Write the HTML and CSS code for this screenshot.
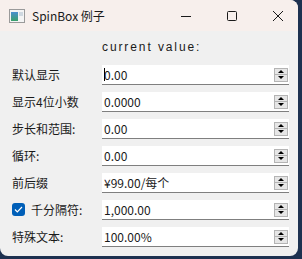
FILE: index.html
```html
<!DOCTYPE html>
<html lang="en">
<head>
    <meta charset="UTF-8">
    <title>SpinBox 例子</title>
    <link rel="stylesheet" href="styles.css">
</head>
<body>

<div class="window">
    <div class="titlebar">
        <svg class="app-icon" width="16" height="14" viewBox="0 0 16 14">
            <defs>
                <linearGradient id="pane" x1="0" y1="0" x2="0" y2="1">
                    <stop offset="0" stop-color="#4a8fd0"/>
                    <stop offset="1" stop-color="#3aa06a"/>
                </linearGradient>
            </defs>
            <rect x="0.5" y="0.5" width="15" height="13" fill="#f4f4f4" stroke="#9a9a9a"/>
            <rect x="2" y="3" width="7" height="9" fill="url(#pane)"/>
            <rect x="10" y="3" width="4" height="4" fill="#cfd8e0"/>
        </svg>
        <span class="title">SpinBox 例子</span>
        <div class="caption-buttons">
            <svg class="cap" width="46" height="30" viewBox="0 0 46 30"><path d="M18 15.5h10" stroke="#1a1a1a" stroke-width="1"/></svg>
            <svg class="cap" width="46" height="30" viewBox="0 0 46 30"><rect x="18.5" y="10.5" width="9" height="9" rx="1" fill="none" stroke="#1a1a1a"/></svg>
            <svg class="cap" width="46" height="30" viewBox="0 0 46 30"><path d="M18 10l10 10M28 10l-10 10" stroke="#1a1a1a" stroke-width="1"/></svg>
        </div>
    </div>

    <div class="content">
        <div class="header">current value:</div>

        <div class="form">
            <label>默认显示</label>
            <div class="spin focused"><span class="caret"></span><span>0.00</span><div class="arrows"><i class="up"></i><i class="down"></i></div></div>

            <label>显示4位小数</label>
            <div class="spin"><span>0.0000</span><div class="arrows"><i class="up"></i><i class="down"></i></div></div>

            <label>步长和范围:</label>
            <div class="spin"><span>0.00</span><div class="arrows"><i class="up"></i><i class="down"></i></div></div>

            <label>循环:</label>
            <div class="spin"><span>0.00</span><div class="arrows"><i class="up"></i><i class="down"></i></div></div>

            <label>前后缀</label>
            <div class="spin"><span>¥99.00/每个</span><div class="arrows"><i class="up"></i><i class="down"></i></div></div>

            <label class="check-label"><span class="checkbox"><svg width="9" height="7" viewBox="0 0 9 7"><path d="M1 3.5l2.3 2.3L8 1" fill="none" stroke="#fff" stroke-width="1.2"/></svg></span>千分隔符:</label>
            <div class="spin"><span>1,000.00</span><div class="arrows"><i class="up"></i><i class="down"></i></div></div>

            <label>特殊文本:</label>
            <div class="spin"><span>100.00%</span><div class="arrows"><i class="up"></i><i class="down"></i></div></div>
        </div>
    </div>
</div>

</body>
</html>
```

FILE: styles.css
```css
body {
    margin: 0;
    background-color: #1d3150;
    font-family: 'Noto Sans CJK SC', 'Noto Sans', sans-serif;
    font-size: 12px;
    color: #1a1a1a;
    width: 302px;
    height: 259px;
    overflow: hidden;
}

.window {
    width: 298px;
    height: 256px;
    background-color: #f0f0f0;
    border-radius: 0 8px 8px 8px;
    overflow: hidden;
}

.titlebar {
    height: 31px;
    background-color: #f7efec;
    display: flex;
    align-items: center;
}

.app-icon {
    margin-left: 9px;
}

.title {
    margin-left: 7px;
    font-size: 12px;
    color: #1a1a1a;
}

.caption-buttons {
    margin-left: auto;
    display: flex;
    margin-right: -3px;
}

.cap {
    display: block;
}

.content {
    padding: 0 9px 0 12px;
}

.header {
    margin-left: 90px;
    height: 34px;
    padding-top: 9px;
    box-sizing: border-box;
    font-family: 'Liberation Sans', sans-serif;
    font-size: 12px;
    letter-spacing: 1.9px;
    line-height: 14px;
}

.form {
    display: grid;
    grid-template-columns: 90px 187px;
    grid-auto-rows: 19px;
    row-gap: 8px;
}

.form label {
    display: flex;
    align-items: center;
    font-size: 12px;
    line-height: 19px;
}

.check-label {
    gap: 6px;
}

.checkbox {
    width: 13px;
    height: 13px;
    background-color: #005fb8;
    border-radius: 3px;
    display: flex;
    align-items: center;
    justify-content: center;
}

.spin {
    position: relative;
    background-color: #ffffff;
    border-bottom: 1px solid #7f7f7f;
    box-sizing: border-box;
    height: 20px;
    display: flex;
    align-items: center;
    padding-left: 2px;
    font-size: 12px;
}

.caret {
    position: absolute;
    left: 2px;
    top: 3px;
    width: 1px;
    height: 13px;
    background-color: #000;
}

.arrows {
    margin-left: auto;
    margin-right: 1px;
    width: 14px;
    height: 14px;
    border: 1px solid #b4b4b4;
    box-sizing: border-box;
    background-color: #e6e6e6;
    display: flex;
    flex-direction: column;
}

.arrows i {
    flex: 1;
    display: flex;
    align-items: center;
    justify-content: center;
}

.arrows i.up {
    border-bottom: 1px solid #b4b4b4;
}

.arrows i::before {
    content: '';
    border-left: 3px solid transparent;
    border-right: 3px solid transparent;
}

.arrows i.up::before {
    border-bottom: 3px solid #000;
}

.arrows i.down::before {
    border-top: 3px solid #000;
}
```
